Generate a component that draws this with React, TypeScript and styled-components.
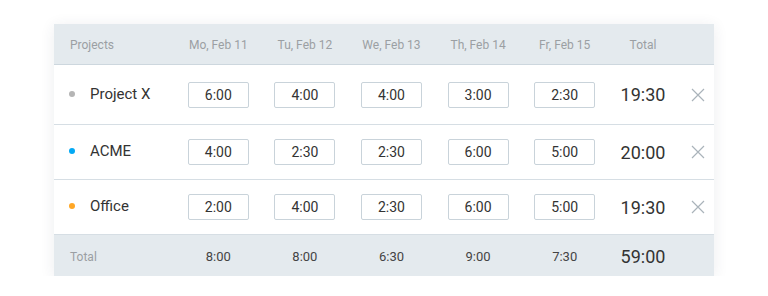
import React from "react";
import styled, { createGlobalStyle } from "styled-components";

const Global = createGlobalStyle`
  html, body { margin: 0; padding: 0; background: #ffffff; }
  body { font-family: Roboto, "Liberation Sans", Arial, sans-serif; }
`;

const Card = styled.div`
  width: 660px;
  margin: 24px auto 0;
  background: #fff;
  box-shadow: 0 2px 14px rgba(40, 60, 80, 0.09);
`;

const cols = "121px repeat(5, 86.6px) 70px 1fr";

const HeaderRow = styled.div`
  display: grid;
  grid-template-columns: ${cols};
  align-items: center;
  height: 38px;
  padding-top: 2px;
  background: #e4eaee;
  border-bottom: 1px solid #cdd7de;
  font-size: 12px;
  color: #9b9fa3;
`;

const Row = styled.div<{ $h: number }>`
  display: grid;
  grid-template-columns: ${cols};
  align-items: center;
  height: ${(p) => p.$h}px;
  border-bottom: 1px solid #d6dee4;
`;

const FooterRow = styled.div`
  display: grid;
  grid-template-columns: ${cols};
  align-items: center;
  height: 39px;
  padding-top: 2px;
  background: #e4eaee;
  font-size: 13px;
  color: #444;
`;

const Label = styled.div`
  padding-left: 16px;
  color: #9b9fa3;
  font-size: 12px;
`;

const Center = styled.div`
  text-align: center;
`;

const ProjectCell = styled.div`
  display: flex;
  align-items: center;
  padding-left: 15px;
  font-size: 15px;
  color: #333;
  padding-bottom: 2px;
`;

const Dot = styled.span<{ $c: string }>`
  width: 6px;
  height: 6px;
  border-radius: 50%;
  background: ${(p) => p.$c};
  margin-right: 15px;
`;

const Cell = styled.div`
  display: flex;
  justify-content: center;
`;

const TimeBox = styled.div`
  width: 59px;
  height: 24px;
  border: 1px solid #c9d3da;
  border-radius: 2px;
  display: flex;
  align-items: center;
  justify-content: center;
  font-size: 14px;
  color: #333;
`;

const Total = styled.div`
  text-align: center;
  font-size: 18px;
  color: #333;
`;

const Remove = styled.div`
  display: flex;
  justify-content: flex-end;
  padding-right: 9px;
`;

const XIcon = () => (
  <svg width="14" height="14" viewBox="0 0 14 14">
    <path d="M1 1 L13 13 M13 1 L1 13" stroke="#aab3ba" strokeWidth="1.2" />
  </svg>
);

const days = ["Mo, Feb 11", "Tu, Feb 12", "We, Feb 13", "Th, Feb 14", "Fr, Feb 15"];

const rows = [
  { name: "Project X", color: "#b5b5b5", times: ["6:00", "4:00", "4:00", "3:00", "2:30"], total: "19:30", h: 59 },
  { name: "ACME", color: "#03a9f4", times: ["4:00", "2:30", "2:30", "6:00", "5:00"], total: "20:00", h: 54 },
  { name: "Office", color: "#ffa726", times: ["2:00", "4:00", "2:30", "6:00", "5:00"], total: "19:30", h: 54 },
];

const totals = ["8:00", "8:00", "6:30", "9:00", "7:30"];

export default function App() {
  return (
    <>
      <Global />
      <Card>
        <HeaderRow>
          <Label>Projects</Label>
          {days.map((d) => (
            <Center key={d}>{d}</Center>
          ))}
          <Center>Total</Center>
          <div />
        </HeaderRow>
        {rows.map((r) => (
          <Row key={r.name} $h={r.h}>
            <ProjectCell>
              <Dot $c={r.color} />
              {r.name}
            </ProjectCell>
            {r.times.map((t, i) => (
              <Cell key={i}>
                <TimeBox>{t}</TimeBox>
              </Cell>
            ))}
            <Total>{r.total}</Total>
            <Remove>
              <XIcon />
            </Remove>
          </Row>
        ))}
        <FooterRow>
          <Label>Total</Label>
          {totals.map((t, i) => (
            <Center key={i}>{t}</Center>
          ))}
          <Total>59:00</Total>
          <div />
        </FooterRow>
      </Card>
    </>
  );
}
